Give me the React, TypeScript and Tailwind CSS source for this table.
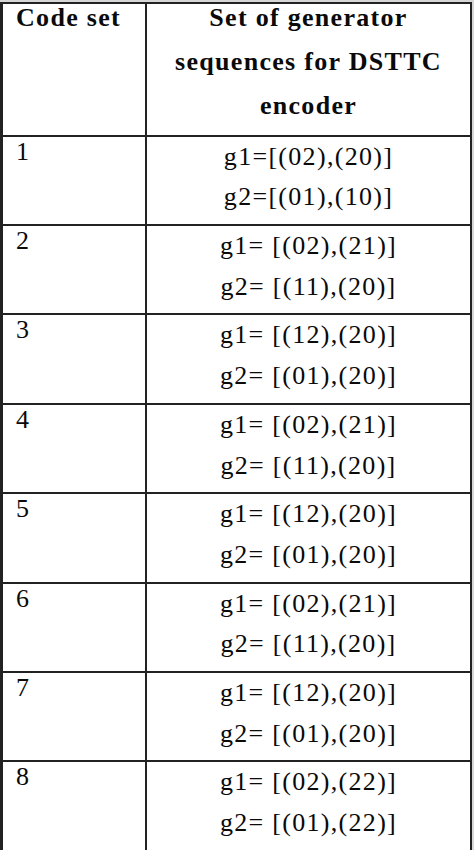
const rows = [
  { id: "1", g1: "g1=[(02),(20)]", g2: "g2=[(01),(10)]" },
  { id: "2", g1: "g1= [(02),(21)]", g2: "g2= [(11),(20)]" },
  { id: "3", g1: "g1= [(12),(20)]", g2: "g2= [(01),(20)]" },
  { id: "4", g1: "g1= [(02),(21)]", g2: "g2= [(11),(20)]" },
  { id: "5", g1: "g1= [(12),(20)]", g2: "g2= [(01),(20)]" },
  { id: "6", g1: "g1= [(02),(21)]", g2: "g2= [(11),(20)]" },
  { id: "7", g1: "g1= [(12),(20)]", g2: "g2= [(01),(20)]" },
  { id: "8", g1: "g1= [(02),(22)]", g2: "g2= [(01),(22)]" },
];

export default function App() {
  return (
    <div className="w-[474px] h-[850px] overflow-hidden bg-[#d6d6d6] pt-[2px] pr-[2px] font-['Liberation_Serif','Times_New_Roman',serif] text-[26px] tracking-[1.3px] text-[#0a0a0a]">
      <div className="bg-white border-l-[3px] border-t-2 border-r-2 border-[#222]">
        {/* header */}
        <div className="flex h-[132.7px] border-b-2 border-[#222] font-bold">
          <div className="w-[144px] shrink-0 border-r-2 border-[#222] pl-[13px]">
            <div className="-mt-[8px] leading-[44px]">Code set</div>
          </div>
          <div className="flex-1 text-center">
            <div className="-mt-[8px] leading-[44px]">
              Set of generator
              <br />
              sequences for DSTTC
              <br />
              encoder
            </div>
          </div>
        </div>

        {rows.map((r) => (
          <div key={r.id} className="flex h-[89.4px] border-b-2 border-[#222]">
            <div className="w-[144px] shrink-0 border-r-2 border-[#222] pl-[13px] leading-[30px]">
              {r.id}
            </div>
            <div className="flex-1 text-center leading-[40.7px]">
              <div>{r.g1}</div>
              <div>{r.g2}</div>
            </div>
          </div>
        ))}
      </div>
    </div>
  );
}
